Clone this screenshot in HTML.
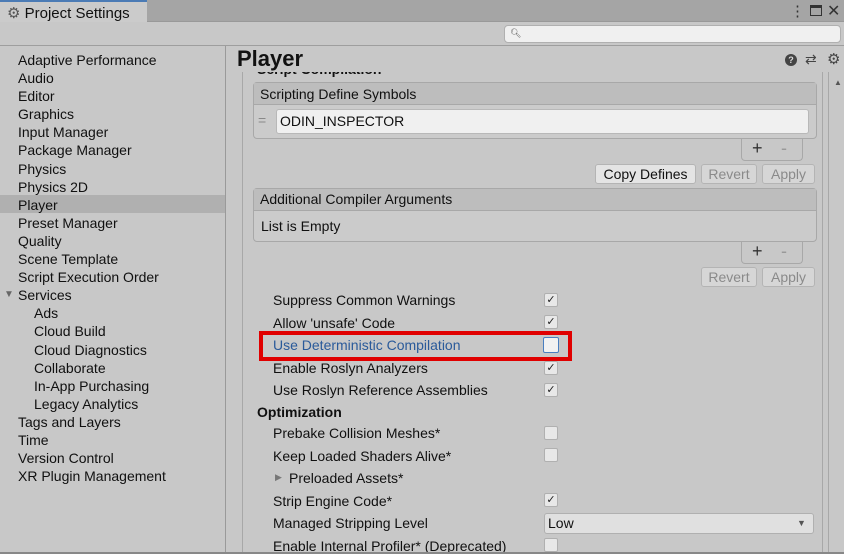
<!DOCTYPE html>
<html><head><style>
*{margin:0;padding:0;box-sizing:border-box}
html,body{width:844px;height:554px;overflow:hidden}
body{background:#c8c8c8;font-family:"Liberation Sans",sans-serif;font-size:13.5px;color:#101010;position:relative}
.a{position:absolute;white-space:nowrap}
.cb{position:absolute;width:14px;height:14px;background:#e8e8e8;border:1px solid #b0b0b0;border-radius:2px;font-size:11px;line-height:12px;text-align:center;color:#222}
.btn{position:absolute;height:20px;border:1px solid #b4b4b4;border-radius:3px;background:#d6d6d6;color:#8a8a8a;text-align:center;line-height:18px;font-size:14px}
</style></head><body>
<div class="a" style="left:0;top:0;width:844px;height:22px;background:#a5a5a5;border-bottom:1px solid #999"></div>
<div class="a" style="left:0;top:0;width:147px;height:22px;background:#cbcbcb;border-top:2px solid #4b7bb5"></div>
<div class="a" style="left:7px;top:4px;font-size:15px;color:#111"><span style="color:#555">⚙</span> Project Settings</div>
<div class="a" style="left:790px;top:2px;font-size:15px;color:#333">⋮</div>
<div class="a" style="left:810px;top:5px;width:12px;height:11px;border:1.5px solid #333;border-top-width:3px"></div>
<div class="a" style="left:827px;top:1px;font-size:16px;color:#333">✕</div>
<div class="a" style="left:504px;top:25px;width:337px;height:18px;background:#f0f0f0;border:1px solid #b0b0b0;border-radius:4px"></div>
<div class="a" style="left:510px;top:28px;font-size:9px;color:#555">🔍︎</div>
<div class="a" style="left:0;top:45px;width:844px;height:1px;background:#9e9e9e"></div>
<div class="a" style="left:225px;top:46px;width:1px;height:508px;background:#9a9a9a"></div>
<div class="a" style="left:0;top:195px;width:225px;height:18px;background:#b0b0b0"></div>
<div class="a" style="left:18px;top:51px;line-height:18.1px;font-size:14px">Adaptive Performance<br>Audio<br>Editor<br>Graphics<br>Input Manager<br>Package Manager<br>Physics<br>Physics 2D<br>Player<br>Preset Manager<br>Quality<br>Scene Template<br>Script Execution Order<br>Services<br><span style="padding-left:16px">Ads</span><br><span style="padding-left:16px">Cloud Build</span><br><span style="padding-left:16px">Cloud Diagnostics</span><br><span style="padding-left:16px">Collaborate</span><br><span style="padding-left:16px">In-App Purchasing</span><br><span style="padding-left:16px">Legacy Analytics</span><br>Tags and Layers<br>Time<br>Version Control<br>XR Plugin Management</div>
<div class="a" style="left:4px;top:289px;font-size:10px;color:#666">▼</div>
<div class="a" style="left:237px;top:46px;font-size:22px;font-weight:bold;color:#111">Player</div>
<div class="a" style="left:785px;top:54px;width:12px;height:12px;border-radius:50%;background:#444;color:#ddd;font-size:9px;font-weight:bold;text-align:center;line-height:12px">?</div>
<div class="a" style="left:805px;top:51px;font-size:14px;color:#444">⇄</div>
<div class="a" style="left:827px;top:50px;font-size:15px;color:#444">⚙</div>
<div class="a" style="left:227px;top:72px;width:595px;height:482px;overflow:hidden">
 <div class="a" style="left:15px;top:0;width:1px;height:482px;background:#a8a8a8"></div>
 <div class="a" style="left:30px;top:-11px;font-weight:bold;font-size:14px">Script Compilation</div>
</div>
<div class="a" style="left:822px;top:72px;width:1px;height:482px;background:#a8a8a8"></div>
<div class="a" style="left:828px;top:72px;width:1px;height:482px;background:#a8a8a8"></div>
<div class="a" style="left:834px;top:78px;font-size:8px;color:#555">▲</div>
<div class="a" style="left:253px;top:82px;width:564px;height:57px;border:1px solid #a8a8a8;border-radius:4px;background:#cbcbcb"></div>
<div class="a" style="left:254px;top:83px;width:562px;height:22px;background:#bdbdbd;border-bottom:1px solid #a8a8a8"></div>
<div class="a" style="left:260px;top:86px;font-size:14px">Scripting Define Symbols</div>
<div class="a" style="left:258px;top:112px;font-size:14px;color:#888">=</div>
<div class="a" style="left:276px;top:109px;width:533px;height:25px;background:#f0f0f0;border:1px solid #b8b8b8;border-radius:3px"></div>
<div class="a" style="left:280px;top:113px;font-size:14px">ODIN_INSPECTOR</div>
<div class="a" style="left:741px;top:139px;width:62px;height:22px;border:1px solid #a8a8a8;border-top:none;border-radius:0 0 4px 4px"></div>
<div class="a" style="left:752px;top:138px;font-size:18px;color:#333">+</div>
<div class="a" style="left:781px;top:138px;font-size:18px;color:#999">-</div>
<div class="btn" style="left:595px;top:164px;width:101px;background:#e4e4e4;color:#111">Copy Defines</div>
<div class="btn" style="left:701px;top:164px;width:56px">Revert</div>
<div class="btn" style="left:762px;top:164px;width:53px">Apply</div>
<div class="a" style="left:253px;top:188px;width:564px;height:54px;border:1px solid #a8a8a8;border-radius:4px;background:#cbcbcb"></div>
<div class="a" style="left:254px;top:189px;width:562px;height:22px;background:#bdbdbd;border-bottom:1px solid #a8a8a8"></div>
<div class="a" style="left:260px;top:191px;font-size:14px">Additional Compiler Arguments</div>
<div class="a" style="left:261px;top:218px;font-size:14px">List is Empty</div>
<div class="a" style="left:741px;top:242px;width:62px;height:22px;border:1px solid #a8a8a8;border-top:none;border-radius:0 0 4px 4px"></div>
<div class="a" style="left:752px;top:241px;font-size:18px;color:#333">+</div>
<div class="a" style="left:781px;top:241px;font-size:18px;color:#999">-</div>
<div class="btn" style="left:701px;top:267px;width:56px">Revert</div>
<div class="btn" style="left:762px;top:267px;width:53px">Apply</div>
<div class="a" style="left:273px;top:289px;font-size:14px;line-height:22.5px">Suppress Common Warnings<br>Allow 'unsafe' Code<br><span style="color:#2a5a9a">Use Deterministic Compilation</span><br>Enable Roslyn Analyzers<br>Use Roslyn Reference Assemblies</div>
<div class="cb" style="left:544px;top:293px">✓</div>
<div class="cb" style="left:544px;top:315px">✓</div>
<div class="cb" style="left:543px;top:337px;width:16px;height:16px;border-color:#4a7fc0;background:#f2f2f2"></div>
<div class="cb" style="left:544px;top:361px">✓</div>
<div class="cb" style="left:544px;top:383px">✓</div>
<div class="a" style="left:259px;top:331px;width:313px;height:30px;border:4px solid #e00000"></div>
<div class="a" style="left:257px;top:404px;font-size:14px;font-weight:bold">Optimization</div>
<div class="a" style="left:273px;top:422px;font-size:14px;line-height:22.5px">Prebake Collision Meshes*<br>Keep Loaded Shaders Alive*<br><span style="padding-left:16px">Preloaded Assets*</span><br>Strip Engine Code*<br>Managed Stripping Level<br>Enable Internal Profiler* (Deprecated)</div>
<div class="a" style="left:275px;top:472px;font-size:9px;color:#777">▶</div>
<div class="cb" style="left:544px;top:426px"></div>
<div class="cb" style="left:544px;top:448px"></div>
<div class="cb" style="left:544px;top:493px">✓</div>
<div class="a" style="left:544px;top:513px;width:270px;height:21px;background:#e0e0e0;border:1px solid #b0b0b0;border-radius:3px"></div>
<div class="a" style="left:548px;top:515px;font-size:14px">Low</div>
<div class="a" style="left:797px;top:518px;font-size:9px;color:#555">▼</div>
<div class="cb" style="left:544px;top:538px"></div>
<div class="a" style="left:0;top:552px;width:844px;height:2px;background:#888"></div>
</body></html>
